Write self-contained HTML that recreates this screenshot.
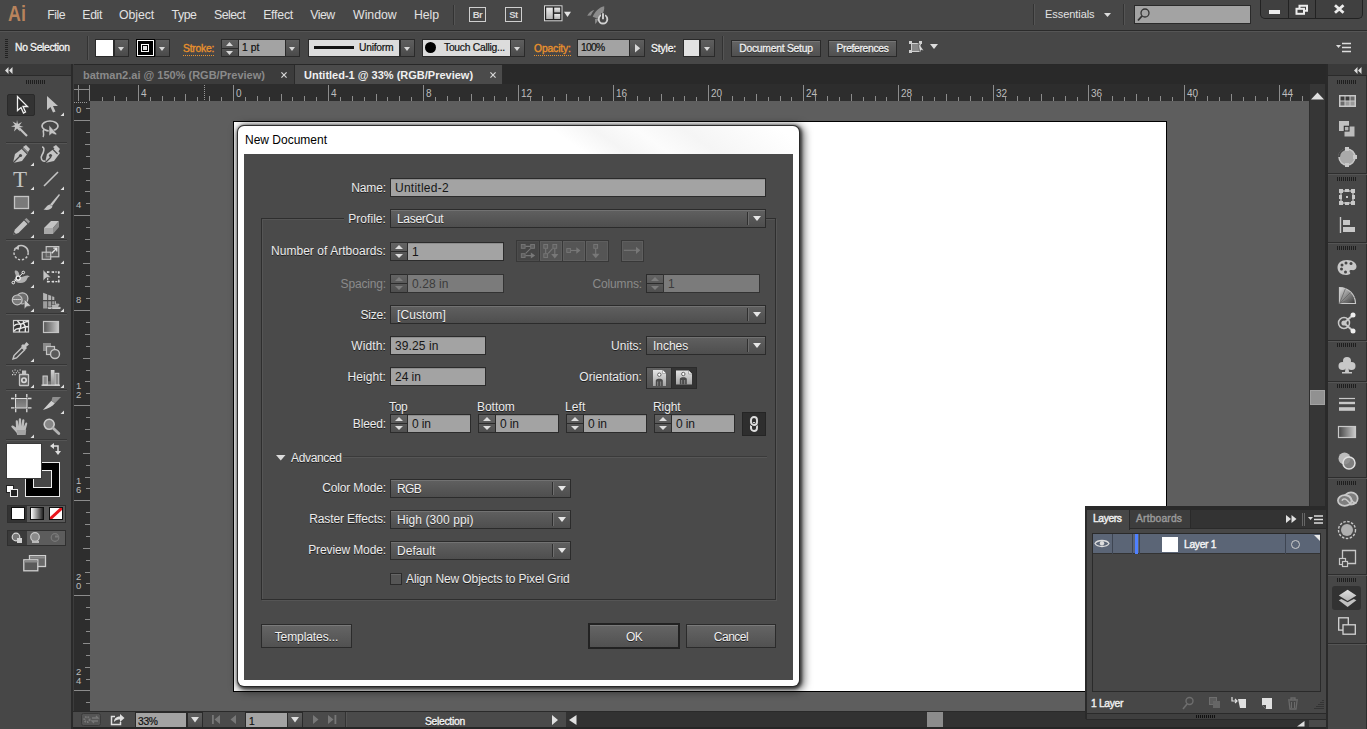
<!DOCTYPE html>
<html><head><meta charset="utf-8"><title>Adobe Illustrator - New Document</title>
<style>
*{box-sizing:border-box;margin:0;padding:0}
html,body{width:1367px;height:729px;overflow:hidden;background:#474747;font-family:"Liberation Sans",sans-serif;font-size:12px;color:#e6e6e6}
div,span,svg,i{position:absolute}
div:before,div:after{position:absolute}
#menubar{left:0;top:0;width:1367px;height:30px;background:#474747}
#menubar .mi{top:8px;font-size:12.3px;color:#e2e2e2;white-space:nowrap;width:80px;text-align:center}
#ctrl{left:0;top:30px;width:1367px;height:34px;background:#474747;border-top:1px solid #2b2b2b;box-shadow:inset 0 1px 0 #555}
#tabs{left:0;top:64px;width:1367px;height:20px;background:#292929}
.sq{width:17px;height:15px;border:1px solid #cfcfcf;font-size:9.5px;font-weight:bold;color:#d8d8d8;text-align:center;line-height:13px;letter-spacing:-.5px}
.vs{width:1px;background:#333;box-shadow:1px 0 0 #555}
.cb{top:8px;height:18px;border:1px solid #2a2a2a}
.ddb{top:8px;height:18px;width:15px;border:1px solid #2a2a2a;background:linear-gradient(#5f5f5f,#4a4a4a)}
.ddb:after{content:"";left:3px;top:7px;border:3.5px solid transparent;border-top:4px solid #d8d8d8;border-bottom:0}
.ol{top:12px;font-size:10.3px;color:#e8912d;border-bottom:1px dotted #e8912d;line-height:12px;-webkit-text-stroke:.35px #e8912d;white-space:nowrap}
.wt{font-size:10.3px;color:#f2f2f2;-webkit-text-stroke:.35px #f2f2f2;text-shadow:0 1px 0 #222;white-space:nowrap}
.dt{font-size:10.3px;color:#111;white-space:nowrap;-webkit-text-stroke:.2px #111}
.btn{border:1px solid #2a2a2a;background:linear-gradient(#646464,#505050);box-shadow:inset 0 1px 0 #757575;text-align:center;color:#f0f0f0;text-shadow:0 1px 0 #222;white-space:nowrap}
#tools{left:0;top:64px;width:74px;height:665px;background:#474747}
.sep{left:6px;width:61px;height:1px;background:#363636;box-shadow:0 1px 0 #555}
.dgrip{left:11px;width:20px;height:4px;background:repeating-linear-gradient(90deg,#1e1e1e 0 1px,transparent 1px 2px)}
.dsep{left:2px;width:39px;height:1px;background:#2d2d2d;box-shadow:0 1px 0 #555}
#canvas{left:74px;top:84px;width:1252px;height:627px;background:#5e5e5e}
#artboard{left:233px;top:121px;width:934px;height:571px;background:#fff;border:1px solid #000}
#dock{left:1326px;top:64px;width:41px;height:665px;background:#474747}
#status{left:73px;top:711px;width:1253px;height:18px;background:#4a4a4a}
#layers{left:1086px;top:507px;width:241px;height:213px;background:#474747;box-shadow:-1px -1px 0 #2a2a2a}
#layers .bt{font-size:10.3px;white-space:nowrap}
#dialog{left:238px;top:126px;width:561px;height:560px;border-radius:6px;background:linear-gradient(35deg,#fff 0 58%,#f5f5f5 65%,#fcfcfc 72%,#f5f5f5 80%,#fafafa 88%,#fff 96%) 0 0/561px 28px no-repeat #fff;box-shadow:0 0 0 1px rgba(40,40,40,.9),1px 1px 3px 2px rgba(0,0,0,.55),2px 2px 9px 3px rgba(0,0,0,.6)}
#dlgc{left:244px;top:154px;width:549px;height:526px;background:#4a4a4a;border:1px solid #4a4a4a;font-size:12px}
#dlgc .l{color:#ececec;text-shadow:0 1px 0 #1e1e1e;white-space:nowrap;text-align:right;width:200px;line-height:14px}
#dlgc .l.dis{color:#8b8b8b;text-shadow:none}
#dlgc .tl{color:#ececec;text-shadow:0 1px 0 #1e1e1e;white-space:nowrap;line-height:14px}
.f{height:19px;background:#a3a3a3;border:1px solid #2b2b2b;color:#161616;line-height:19px;padding-left:4px;white-space:nowrap;box-shadow:inset 0 1px 0 #8d8d8d}
.f.dis{background:#7b7b7b;color:#3c3c3c;box-shadow:none;border-color:#333}
.dd{height:19px;background:linear-gradient(#606060,#4e4e4e);border:1px solid #2b2b2b;color:#f0f0f0;line-height:19px;padding-left:6px;white-space:nowrap;box-shadow:inset 0 1px 0 #727272;text-shadow:0 1px 0 #2a2a2a}
.dd:before{content:"";right:17px;top:2px;width:1px;height:13px;background:#2f2f2f;box-shadow:1px 0 0 #6e6e6e}
.dd:after{content:"";right:4px;top:6px;border:4.2px solid transparent;border-top:5.6px solid #e6e6e6;border-bottom:0}
.sp{width:18px;height:19px;background:linear-gradient(#636363,#4f4f4f);border:1px solid #2b2b2b}
.sp:before{content:"";left:0;top:8px;width:16px;height:1px;background:#2b2b2b}
.sp:after{content:"";left:4px;top:2px;width:0;height:0;border:4px solid transparent;border-bottom:4px solid #dcdcdc;border-top:0}
.sp i{left:4px;top:11px;width:0;height:0;border:4px solid transparent;border-top:4px solid #dcdcdc;border-bottom:0}
.sp.dis:after{border-bottom-color:#7c7c7c}.sp.dis i{border-top-color:#7c7c7c}
.b{border:1px solid #2b2b2b;background:linear-gradient(#656565,#515151);box-shadow:inset 0 1px 0 #7a7a7a;text-align:center;color:#f0f0f0;text-shadow:0 1px 0 #222;white-space:nowrap;font-size:12px}
.ib{width:24px;height:22px;background:#535353;border:1px solid #383838}
</style></head>
<body>
<div id="canvas"></div>
<div id="hruler" style="left:74px;top:84px;width:1235px;height:17px;background:#2d2d2d"></div>
<div id="vruler" style="left:74px;top:84px;width:16px;height:627px;background:#2d2d2d"></div>
<svg style="left:74px;top:84px" width="1235" height="17" viewBox="74 84 1235 17"><path d="M102.5 97v4M114.5 96v5M126.5 97v4M138.5 85v16M150.5 97v4M162.5 96v5M174.5 97v4M185.5 94v7M197.5 97v4M209.5 96v5M221.5 97v4M233.5 85v16M245.5 97v4M257.5 96v5M269.5 97v4M281.5 94v7M292.5 97v4M304.5 96v5M316.5 97v4M328.5 85v16M340.5 97v4M352.5 96v5M364.5 97v4M376.5 94v7M387.5 97v4M399.5 96v5M411.5 97v4M423.5 85v16M435.5 97v4M447.5 96v5M459.5 97v4M471.5 94v7M483.5 97v4M494.5 96v5M506.5 97v4M518.5 85v16M530.5 97v4M542.5 96v5M554.5 97v4M566.5 94v7M578.5 97v4M589.5 96v5M601.5 97v4M613.5 85v16M625.5 97v4M637.5 96v5M649.5 97v4M661.5 94v7M673.5 97v4M684.5 96v5M696.5 97v4M708.5 85v16M720.5 97v4M732.5 96v5M744.5 97v4M756.5 94v7M768.5 97v4M780.5 96v5M791.5 97v4M803.5 85v16M815.5 97v4M827.5 96v5M839.5 97v4M851.5 94v7M863.5 97v4M875.5 96v5M886.5 97v4M898.5 85v16M910.5 97v4M922.5 96v5M934.5 97v4M946.5 94v7M958.5 97v4M970.5 96v5M982.5 97v4M993.5 85v16M1005.5 97v4M1017.5 96v5M1029.5 97v4M1041.5 94v7M1053.5 97v4M1065.5 96v5M1077.5 97v4M1088.5 85v16M1100.5 97v4M1112.5 96v5M1124.5 97v4M1136.5 94v7M1148.5 97v4M1160.5 96v5M1172.5 97v4M1184.5 85v16M1195.5 97v4M1207.5 96v5M1219.5 97v4M1231.5 94v7M1243.5 97v4M1255.5 96v5M1267.5 97v4M1279.5 85v16M1290.5 97v4M1302.5 96v5" stroke="#8c8c8c" stroke-width="1" fill="none"/><text x="141" y="97" font-size="10" fill="#bdbdbd" font-family="Liberation Sans,sans-serif">4</text><text x="236" y="97" font-size="10" fill="#bdbdbd" font-family="Liberation Sans,sans-serif">0</text><text x="331" y="97" font-size="10" fill="#bdbdbd" font-family="Liberation Sans,sans-serif">4</text><text x="426" y="97" font-size="10" fill="#bdbdbd" font-family="Liberation Sans,sans-serif">8</text><text x="521" y="97" font-size="10" fill="#bdbdbd" font-family="Liberation Sans,sans-serif">12</text><text x="616" y="97" font-size="10" fill="#bdbdbd" font-family="Liberation Sans,sans-serif">16</text><text x="711" y="97" font-size="10" fill="#bdbdbd" font-family="Liberation Sans,sans-serif">20</text><text x="806" y="97" font-size="10" fill="#bdbdbd" font-family="Liberation Sans,sans-serif">24</text><text x="901" y="97" font-size="10" fill="#bdbdbd" font-family="Liberation Sans,sans-serif">28</text><text x="996" y="97" font-size="10" fill="#bdbdbd" font-family="Liberation Sans,sans-serif">32</text><text x="1091" y="97" font-size="10" fill="#bdbdbd" font-family="Liberation Sans,sans-serif">36</text><text x="1187" y="97" font-size="10" fill="#bdbdbd" font-family="Liberation Sans,sans-serif">40</text><text x="1282" y="97" font-size="10" fill="#bdbdbd" font-family="Liberation Sans,sans-serif">44</text><path d="M78.5 85v16M74 89.5h16M89.5 85v16" stroke="#8c8c8c" fill="none"/><path d="M204.5 85v16" stroke="#999" stroke-dasharray="1 1" fill="none"/></svg>
<svg style="left:74px;top:101px" width="16" height="610" viewBox="74 101 16 610"><path d="M86 108.5h4M74 120.5h16M86 132.5h4M85 144.5h5M86 156.5h4M83 168.5h7M86 180.5h4M85 191.5h5M86 203.5h4M74 215.5h16M86 227.5h4M85 239.5h5M86 251.5h4M83 263.5h7M86 275.5h4M85 286.5h5M86 298.5h4M74 310.5h16M86 322.5h4M85 334.5h5M86 346.5h4M83 358.5h7M86 370.5h4M85 381.5h5M86 393.5h4M74 405.5h16M86 417.5h4M85 429.5h5M86 441.5h4M83 453.5h7M86 465.5h4M85 477.5h5M86 488.5h4M74 500.5h16M86 512.5h4M85 524.5h5M86 536.5h4M83 548.5h7M86 560.5h4M85 572.5h5M86 583.5h4M74 595.5h16M86 607.5h4M85 619.5h5M86 631.5h4M83 643.5h7M86 655.5h4M85 667.5h5M86 679.5h4M74 690.5h16M86 702.5h4" stroke="#8c8c8c" stroke-width="1" fill="none"/><path d="M74 102.5h13" stroke="#999" stroke-dasharray="1 1"/><text x="76" y="113.2" font-size="9.5" fill="#bdbdbd" font-family="Liberation Sans,sans-serif">0</text><text x="76" y="208.2" font-size="9.5" fill="#bdbdbd" font-family="Liberation Sans,sans-serif">4</text><text x="76" y="303.3" font-size="9.5" fill="#bdbdbd" font-family="Liberation Sans,sans-serif">8</text><text x="76" y="389.4" font-size="9.5" fill="#bdbdbd" font-family="Liberation Sans,sans-serif">1</text><text x="76" y="398.4" font-size="9.5" fill="#bdbdbd" font-family="Liberation Sans,sans-serif">2</text><text x="76" y="484.4" font-size="9.5" fill="#bdbdbd" font-family="Liberation Sans,sans-serif">1</text><text x="76" y="493.4" font-size="9.5" fill="#bdbdbd" font-family="Liberation Sans,sans-serif">6</text><text x="76" y="579.5" font-size="9.5" fill="#bdbdbd" font-family="Liberation Sans,sans-serif">2</text><text x="76" y="588.5" font-size="9.5" fill="#bdbdbd" font-family="Liberation Sans,sans-serif">0</text><text x="76" y="674.5" font-size="9.5" fill="#bdbdbd" font-family="Liberation Sans,sans-serif">2</text><text x="76" y="683.5" font-size="9.5" fill="#bdbdbd" font-family="Liberation Sans,sans-serif">4</text></svg>
<div style="left:1309px;top:84px;width:17px;height:627px;background:#363636;border-left:1px solid #2d2d2d;border-right:1px solid #2a2a2a"></div>
<svg style="left:1311px;top:92px" width="14" height="8"><path d="M0 7.5h13l-6.5-7z" fill="#e0e0e0"/></svg>
<div style="left:1310px;top:390px;width:15px;height:15px;background:#919191;border:1px solid #a2a2a2"></div>
<div id="artboard"></div>
<div id="menubar">
<span style="left:8px;top:2px;font-size:21.5px;font-weight:bold;color:#b9835c;transform:scaleX(.83);transform-origin:0 0;white-space:nowrap">Ai</span>
<span class="mi" style="left:16.2px;letter-spacing:-0.48px">File</span>
<span class="mi" style="left:52.2px;letter-spacing:-0.38px">Edit</span>
<span class="mi" style="left:96.6px;letter-spacing:-0.04px">Object</span>
<span class="mi" style="left:144px;letter-spacing:-0.44px">Type</span>
<span class="mi" style="left:189.5px;letter-spacing:-0.51px">Select</span>
<span class="mi" style="left:238.1px;letter-spacing:-0.22px">Effect</span>
<span class="mi" style="left:282.4px;letter-spacing:-0.51px">View</span>
<span class="mi" style="left:334.9px;letter-spacing:-0.01px">Window</span>
<span class="mi" style="left:386.5px;letter-spacing:-0.07px">Help</span>
<div class="vs" style="left:453px;top:5px;height:20px"></div>
<div class="sq" style="left:469px;top:7px">Br</div>
<div class="sq" style="left:505px;top:7px">St</div>
<svg style="left:544px;top:5px" width="28" height="17" viewBox="0 0 28 17"><defs><linearGradient id="lg" x1="0" y1="0" x2="0" y2="1"><stop offset="0" stop-color="#ececec"/><stop offset="1" stop-color="#b4b4b4"/></linearGradient></defs><rect x=".5" y=".8" width="17.5" height="15" fill="#222" stroke="#d8d8d8"/><rect x="2.2" y="2.6" width="6.6" height="11.4" fill="url(#lg)"/><rect x="10.2" y="2.6" width="6" height="4.8" fill="url(#lg)"/><rect x="10.2" y="8.9" width="6" height="5.1" fill="url(#lg)"/><path d="M20 6.8h7l-3.5 5.2z" fill="#e4e4e4"/></svg>
<svg style="left:586px;top:5px" width="26" height="21" viewBox="0 0 26 21"><path d="M18.2 1.2c.6 3.5-1 8-4.5 11l-3 1-4-1.5c2-5 6.5-9.5 11.5-10.5z" fill="#8c8c8c"/><path d="M1.2 10.8c1.5-3 4-5 7-5.8-1.5 1.8-2.6 3.6-3.4 5.6z" fill="#8c8c8c"/><path d="M9 14l3.5-.8c-.5 2-1.5 4-3.3 5.8z" fill="#8c8c8c"/><circle cx="17" cy="14.2" r="4.3" fill="#474747" stroke="#d2d2d2" stroke-width="1.9"/><path d="M17 8v6.2" stroke="#474747" stroke-width="4"/><path d="M17 8.2v6" stroke="#d2d2d2" stroke-width="1.9"/></svg>
<div class="vs" style="left:1033px;top:4px;height:21px"></div>
<span class="mi" style="left:1045px;top:8px;width:auto;text-align:left;font-size:11px;letter-spacing:-0.06px">Essentials</span>
<svg style="left:1104px;top:13px" width="8" height="5"><path d="M0 0h7l-3.5 4z" fill="#ddd"/></svg>
<div class="vs" style="left:1123px;top:4px;height:21px"></div>
<div style="left:1134px;top:5px;width:117px;height:19px;background:#a3a3a3;border:1px solid #2a2a2a"></div>
<svg style="left:1136px;top:7px" width="16" height="15" viewBox="0 0 16 15"><circle cx="9" cy="6" r="4" fill="none" stroke="#333" stroke-width="1.3"/><path d="M6 9l-4 4.5" stroke="#333" stroke-width="1.8"/></svg>
<div style="left:1260px;top:0;width:103px;height:19px;background:#404040;border:1px solid #222;border-top:0;border-radius:0 0 5px 5px"></div>
<div style="left:1288px;top:0;width:1px;height:18px;background:#222"></div>
<div style="left:1315px;top:0;width:1px;height:18px;background:#222"></div>
<div style="left:1269px;top:10px;width:11px;height:4px;background:#ececec"></div>
<svg style="left:1295px;top:4px" width="14" height="12" viewBox="0 0 14 12"><path d="M4.5 4V1.8h7.5v5h-2.5" fill="none" stroke="#ececec" stroke-width="2"/><rect x="1.5" y="4.8" width="7.5" height="5" fill="none" stroke="#ececec" stroke-width="2"/></svg>
<svg style="left:1333px;top:4px" width="13" height="10" viewBox="0 0 13 10"><path d="M2 1.2l8.5 7.6M10.5 1.2L2 8.8" stroke="#ececec" stroke-width="2.8"/></svg>
</div>
<div id="ctrl">
<div style="left:5px;top:8px;width:3px;height:20px;background:repeating-linear-gradient(#222 0 1px,transparent 1px 2px)"></div>
<span class="wt" style="left:15px;top:11px;font-size:10.3px;letter-spacing:-0.31px">No Selection</span>
<div class="vs" style="left:87px;top:5px;height:24px"></div>
<div class="cb" style="left:95px;width:19px;background:#fff"></div>
<div class="ddb" style="left:114px"></div>
<div class="cb" style="left:136px;width:19px;background:#000;border-color:#000;box-shadow:inset 0 0 0 1px #fff"></div>
<div style="left:141px;top:13px;width:8px;height:8px;border:1px solid #fff"></div>
<div style="left:143px;top:15px;width:4px;height:4px;background:#e0e0e0"></div>
<div class="ddb" style="left:155px"></div>
<span class="ol" style="left:183px;font-size:10.3px;letter-spacing:-0.22px">Stroke:</span>
<div class="cb" style="left:221px;width:18px;background:linear-gradient(#5f5f5f,#4a4a4a)"></div>
<div style="left:222px;top:17px;width:16px;height:1px;background:#2a2a2a"></div>
<svg style="left:225px;top:11px" width="10" height="14"><path d="M1 4h7l-3.5-4zM1 9h7l-3.5 4z" fill="#d8d8d8"/></svg>
<div class="cb" style="left:238px;width:48px;background:#a3a3a3"></div>
<span class="dt" style="left:242px;top:11px;font-size:10.3px;letter-spacing:0.05px">1 pt</span>
<div class="ddb" style="left:285px"></div>
<div class="cb" style="left:308px;width:92px;background:#dcdcdc"></div>
<div style="left:314px;top:15px;width:40px;height:3px;background:#111"></div>
<span class="dt" style="left:359px;top:11px;font-size:10.3px;letter-spacing:-0.25px">Uniform</span>
<div class="ddb" style="left:400px"></div>
<div class="cb" style="left:422px;width:89px;background:#dcdcdc"></div>
<div style="left:425px;top:11px;width:11px;height:11px;border-radius:6px;background:#000"></div>
<span class="dt" style="left:444px;top:11px;font-size:10.3px;letter-spacing:-0.25px">Touch Callig...</span>
<div class="ddb" style="left:510px"></div>
<span class="ol" style="left:534px;font-size:10.3px;letter-spacing:-0.12px">Opacity:</span>
<div class="cb" style="left:577px;width:53px;background:#a3a3a3"></div>
<span class="dt" style="left:581px;top:11px;font-size:10.3px;letter-spacing:-0.69px">100%</span>
<div class="cb" style="left:629px;width:16px;background:linear-gradient(#5f5f5f,#4a4a4a)"></div>
<svg style="left:635px;top:13px" width="6" height="9"><path d="M0 0v8.5l5.2-4.25z" fill="#d8d8d8"/></svg>
<span class="wt" style="left:651px;top:12px;font-size:10.3px;letter-spacing:-0.13px">Style:</span>
<div class="cb" style="left:683px;width:17px;background:#e2e2e2"></div>
<div class="ddb" style="left:700px"></div>
<div class="vs" style="left:722px;top:5px;height:24px"></div>
<div class="btn" style="left:731px;top:9px;width:90px;height:17px;line-height:15px;font-size:10.3px;letter-spacing:-0.23px;-webkit-text-stroke:.3px #eee">Document Setup</div>
<div class="btn" style="left:828px;top:9px;width:69px;height:17px;line-height:15px;font-size:10.3px;letter-spacing:-0.32px;-webkit-text-stroke:.3px #eee">Preferences</div>
<svg style="left:907px;top:8px" width="34" height="16" viewBox="0 0 34 16"><rect x="4.5" y="4.5" width="9" height="8" fill="#888" stroke="#cfcfcf"/><path d="M2 2h3v3h-3zM12 2h3v3h-3zM2 11h3v3h-3z" fill="#cfcfcf"/><path d="M11 3l6 9-3-1-1 3z" fill="#ddd" stroke="#333" stroke-width=".5"/><path d="M23 5h8l-4 5z" fill="#ddd"/></svg>
<svg style="left:1336px;top:11px" width="16" height="11" viewBox="0 0 16 11"><path d="M0 3h5l-2.5 3z" fill="#ddd"/><path d="M6 1.5h9M6 5.5h9M6 9.5h9" stroke="#ddd" stroke-width="1.4"/></svg>
</div>
<div id="tabs">
<div style="left:0;top:0;width:1367px;height:1px;background:#282828"></div>
<div style="left:73px;top:1px;width:222px;height:19px;background:#3c3c3c;border-right:1px solid #2a2a2a"></div>
<span style="left:83px;top:5px;font-size:11px;font-weight:bold;color:#8a8a8a;white-space:nowrap">batman2.ai @ 150% (RGB/Preview)</span>
<svg style="left:281px;top:8px" width="6" height="6"><path d="M.4.4l5.2 5.2M5.6.4l-5.2 5.2" stroke="#d8d8d8" stroke-width="1.2"/></svg>
<div style="left:295px;top:1px;width:208px;height:19px;background:#4b4b4b;border-right:1px solid #2a2a2a"></div>
<span style="left:304px;top:5px;font-size:11px;font-weight:bold;color:#f0f0f0;white-space:nowrap">Untitled-1 @ 33% (RGB/Preview)</span>
<svg style="left:490px;top:8px" width="6" height="6"><path d="M.4.4l5.2 5.2M5.6.4l-5.2 5.2" stroke="#d8d8d8" stroke-width="1.2"/></svg>
</div>
<div id="tools">
<div style="left:0;top:0;width:73px;height:12px;background:#3a3a3a;border-bottom:1px solid #2a2a2a"></div>
<svg style="left:5px;top:3px" width="9" height="7"><path d="M3.5 0v7l-3.5-3.5zM7.5 0v7l-3.5-3.5z" fill="#ddd"/></svg>
<div style="left:26px;top:16px;width:20px;height:4px;background:repeating-linear-gradient(90deg,#1e1e1e 0 1px,transparent 1px 2px)"></div>
<div class="sep" style="top:78px"></div><div class="sep" style="top:175px"></div><div class="sep" style="top:249px"></div><div class="sep" style="top:300px"></div><div class="sep" style="top:325px"></div><div class="sep" style="top:375px"></div>
<div style="left:71px;top:0;width:2px;height:665px;background:#2a2a2a"></div><div style="left:73px;top:0;width:1px;height:665px;background:#3c3c3c"></div>
</div>
<div id="toolicons">
<div style="left:7px;top:94px;width:28px;height:22px;background:#333;border:1px solid #2a2a2a;border-radius:2px"></div>
<svg style="left:8px;top:93px" width="26" height="24" viewBox="0 0 26 24"><path d="M9.5 3.5v14l3.5-3 2.5 5.5 2-1-2.5-5.5h4.5z" fill="#2a2a2a" stroke="#f2f2f2" stroke-width="1.3"/></svg>
<svg style="left:38px;top:93px" width="26" height="24" viewBox="0 0 26 24"><path d="M9 3v14l3.5-3 2.5 5.5 2.5-1-2.5-5.5h5z" fill="#c4c4c4"/><path d="M26 19.5v3.5h-3.5z" fill="#e0e0e0"/></svg>
<svg style="left:8px;top:117px" width="26" height="24" viewBox="0 0 26 24"><path d="M11 11l8 8" stroke="#c4c4c4" stroke-width="2.2"/><path d="M9 3l1 4 4-2-2.5 3.5 4 1.5-4.5.5 1 4-3-3-3 3 1-4.5-4-.5 4-1.5-2.5-3.5 4 2z" fill="#c4c4c4"/></svg>
<svg style="left:38px;top:117px" width="26" height="24" viewBox="0 0 26 24"><ellipse cx="12" cy="9" rx="8" ry="5" fill="none" stroke="#c4c4c4" stroke-width="1.7"/><path d="M6 12c-2 3 1 5-1 8" stroke="#c4c4c4" stroke-width="1.5" fill="none"/><path d="M11 8v11l3-2.5 4 1.5 1-1z" fill="#c4c4c4" stroke="#474747" stroke-width=".6"/></svg>
<svg style="left:8px;top:143px" width="26" height="24" viewBox="0 0 26 24"><path d="M5 20l2-9 8-6 5 5-6 8z" fill="#c4c4c4"/><path d="M15 4l3-2 4 4-2 3z" fill="#c4c4c4"/><path d="M5 20l7-7" stroke="#474747" stroke-width="1.2"/><circle cx="12.5" cy="12.5" r="1.6" fill="#474747"/><path d="M14 5.5l5.5 5.5" stroke="#474747" stroke-width="1.1"/><path d="M26 19.5v3.5h-3.5z" fill="#e0e0e0"/></svg>
<svg style="left:38px;top:143px" width="26" height="24" viewBox="0 0 26 24"><path d="M7 20l2-9 8-6 5 5-6 8z" fill="#c4c4c4"/><path d="M15 4l3-2 4 4-2 3z" fill="#c4c4c4"/><path d="M7 20l6-6" stroke="#474747" stroke-width="1.2"/><circle cx="12.5" cy="12.5" r="1.6" fill="#474747"/><path d="M14 5.5l5.5 5.5" stroke="#474747" stroke-width="1.1"/><path d="M4 4c3 0 2 5 0 8s0 7 3 6" stroke="#c4c4c4" stroke-width="1.6" fill="none"/></svg>
<svg style="left:8px;top:167px" width="26" height="24" viewBox="0 0 26 24"><text x="5" y="20" font-family="Liberation Serif,serif" font-size="23" fill="#c4c4c4">T</text><path d="M26 19.5v3.5h-3.5z" fill="#e0e0e0"/></svg>
<svg style="left:38px;top:167px" width="26" height="24" viewBox="0 0 26 24"><path d="M6 19L20 5" stroke="#c4c4c4" stroke-width="1.6"/><path d="M26 19.5v3.5h-3.5z" fill="#e0e0e0"/></svg>
<svg style="left:8px;top:191px" width="26" height="24" viewBox="0 0 26 24"><rect x="6.5" y="5.5" width="14" height="12" fill="#7a7a7a" stroke="#c4c4c4" stroke-width="1.3"/><path d="M26 19.5v3.5h-3.5z" fill="#e0e0e0"/></svg>
<svg style="left:38px;top:191px" width="26" height="24" viewBox="0 0 26 24"><path d="M21 3l1 1-8 11-2-1.5z" fill="#c4c4c4"/><path d="M11.5 13.5l3 2c-1 3-5 4-9 3 2-1 3-4 6-5z" fill="#c4c4c4"/><path d="M26 19.5v3.5h-3.5z" fill="#e0e0e0"/></svg>
<svg style="left:8px;top:215px" width="26" height="24" viewBox="0 0 26 24"><path d="M5 20l2-5.5 9-9 3.5 3.5-9 9z" fill="#c4c4c4"/><path d="M16.5 4.5l2-1.5 3.5 3.5-1.5 2z" fill="#9a9a9a"/><path d="M5 20l1-3 2 2z" fill="#474747"/><path d="M26 19.5v3.5h-3.5z" fill="#e0e0e0"/></svg>
<svg style="left:38px;top:215px" width="26" height="24" viewBox="0 0 26 24"><path d="M6 13l7-7h8l-6 7z" fill="#c4c4c4"/><path d="M6 13h9v6h-9z" fill="#a8a8a8"/><path d="M15 13l6-7v6l-6 7z" fill="#8c8c8c"/><path d="M26 19.5v3.5h-3.5z" fill="#e0e0e0"/></svg>
<svg style="left:8px;top:241px" width="26" height="24" viewBox="0 0 26 24"><path d="M20.2 11.7A7.1 7.1 0 1 1 8 6.8" fill="none" stroke="#c4c4c4" stroke-width="1.5" stroke-dasharray="2.3 1.7"/><path d="M9.5 5.6A7.1 7.1 0 0 1 20.2 11.7" fill="none" stroke="#c4c4c4" stroke-width="1.6"/><path d="M5.8 7.6l5.4-3.6-.4 4.8z" fill="#c4c4c4"/><path d="M26 19.5v3.5h-3.5z" fill="#e0e0e0"/></svg>
<svg style="left:38px;top:241px" width="26" height="24" viewBox="0 0 26 24"><rect x="8.2" y="5.6" width="12.6" height="10.2" fill="#5c5c5c" stroke="#c4c4c4" stroke-width="1.2"/><rect x="4.2" y="11.2" width="8.5" height="7.1" fill="#6a6a6a" fill-opacity=".6" stroke="#c4c4c4" stroke-width="1.2"/><path d="M13.7 12.2l5-5M15.3 7.2h3.5v3.4" stroke="#e4e4e4" stroke-width="1.3" fill="none"/><path d="M26 19.5v3.5h-3.5z" fill="#e0e0e0"/></svg>
<svg style="left:8px;top:265px" width="26" height="24" viewBox="0 0 26 24"><path d="M7 5.5c2.5-.5 4 1.5 4.3 4.2.3 2.5 2 3 4.7 1.6 2.5-1.3 5-1.2 5.8.8-1.3-.3-2.3.3-2.6 1.7-.8 3-4 4.4-7.4 4.2-2.6-.2-4.6-1.3-5.8-3.3 1.8-1 2.3-3.4 1.4-5.4-.6-1.3-1-2.6-.4-3.8z" fill="#b0b0b0"/><path d="M5.3 17.6l10-10.1" stroke="#f0f0f0" stroke-width="1"/><circle cx="5.3" cy="17.6" r="1.3" fill="#474747" stroke="#f0f0f0" stroke-width="1"/><circle cx="15.3" cy="7.5" r="1.3" fill="#474747" stroke="#f0f0f0" stroke-width="1"/><circle cx="10.2" cy="13.1" r="2" fill="#333" stroke="#f4f4f4" stroke-width="1.2"/><path d="M26 19.5v3.5h-3.5z" fill="#e0e0e0"/></svg>
<svg style="left:38px;top:265px" width="26" height="24" viewBox="0 0 26 24"><rect x="9.7" y="7" width="11.1" height="9.6" fill="none" stroke="#dedede" stroke-width="1.1" stroke-dasharray="2 1.7"/><path d="M8.9 6.2h1.7v1.7H8.9zM14.4 6.2h1.7v1.7h-1.7zM19.9 6.2h1.7v1.7h-1.7zM19.9 11h1.7v1.7h-1.7zM19.9 15.8h1.7v1.7h-1.7zM14.4 15.8h1.7v1.7h-1.7zM8.9 15.8h1.7v1.7H8.9z" fill="#dedede"/><path d="M5.1 4.8v10.9l3-2.9 4.7-.6z" fill="#c4c4c4" stroke="#474747" stroke-width=".5"/></svg>
<svg style="left:8px;top:289px" width="26" height="24" viewBox="0 0 26 24"><circle cx="14.3" cy="9.4" r="5.6" fill="#6e6e6e" stroke="#c4c4c4" stroke-width="1.2"/><circle cx="9.2" cy="10.9" r="4.9" fill="#7a7a7a" stroke="#c4c4c4" stroke-width="1.2"/><path d="M5.5 10.5h8" stroke="#fff" stroke-width="1.2" stroke-dasharray="1.1 .9"/><path d="M16.3 10.3v9.6l2.6-2.5 4.1-.4z" fill="#cacaca" stroke="#474747" stroke-width=".5"/><path d="M26 19.5v3.5h-3.5z" fill="#e0e0e0"/></svg>
<svg style="left:38px;top:289px" width="26" height="24" viewBox="0 0 26 24"><path d="M5.1 3.8l4.1 1.5v5.8H5.1zM10.2 5.7l3 1.1v4.3h-3zM14.2 7.2l2.1.8v3.1h-2.1z" fill="#b4b4b4"/><path d="M5.1 12.2h4.1v7.3H5.1zM10.2 12.2h3v5h-3zM14.2 12.2h2.1v3h-2.1z" fill="#9c9c9c"/><path d="M10.2 18.2h3v1.3h-3zM14.2 16.3h6v1h-6zM14.2 18.4h8v1.1h-8zM17.3 12.2v3h3.5v1" fill="none" stroke="#c8c8c8" stroke-width="1"/><path d="M26 19.5v3.5h-3.5z" fill="#e0e0e0"/></svg>
<svg style="left:8px;top:315px" width="26" height="24" viewBox="0 0 26 24"><rect x="5.5" y="5.5" width="15" height="11.5" fill="#343434" stroke="#d0d0d0" stroke-width="1.2"/><path d="M6 11c2.5-3.5 5-1 7.5-2s3.5-3 7-2.5M6 16c3-4 5.5-1.5 8-3s4-1 6.5-1.5M9.5 6c2 2.5 4.5 3 3 6.5s-1.5 3-1 4.5M15.5 6c-1.5 3 2.5 4 2 7s-.5 3 0 4" stroke="#e8e8e8" stroke-width="1.4" fill="none"/></svg>
<svg style="left:38px;top:315px" width="26" height="24" viewBox="0 0 26 24"><defs><linearGradient id="gg"><stop offset="0" stop-color="#555"/><stop offset="1" stop-color="#c8c8c8"/></linearGradient></defs><rect x="5.5" y="6.5" width="15" height="11" fill="url(#gg)" stroke="#c4c4c4" stroke-width="1.2"/></svg>
<svg style="left:8px;top:339px" width="26" height="24" viewBox="0 0 26 24"><path d="M5 20l1-3.5 8-8 2.5 2.5-8 8z" fill="none" stroke="#c4c4c4" stroke-width="1.4"/><path d="M13 7l2-2 1 1 2.5-3 2.5 2.5-3 2.5 1 1-2 2z" fill="#c4c4c4"/><path d="M26 19.5v3.5h-3.5z" fill="#e0e0e0"/></svg>
<svg style="left:38px;top:339px" width="26" height="24" viewBox="0 0 26 24"><rect x="5" y="4" width="8" height="8" fill="#8a8a8a"/><rect x="8.5" y="7.5" width="8" height="8" fill="#6a6a6a" stroke="#c4c4c4" stroke-width="1.2"/><circle cx="17" cy="15" r="4.5" fill="#5a5a5a" stroke="#c4c4c4" stroke-width="1.4"/></svg>
<svg style="left:8px;top:365px" width="26" height="24" viewBox="0 0 26 24"><rect x="11.5" y="9.5" width="9" height="11" rx=".6" fill="#5e5e5e" stroke="#c4c4c4" stroke-width="1.3"/><circle cx="16" cy="15.2" r="2.2" fill="none" stroke="#d8d8d8" stroke-width="1.7"/><rect x="14" y="5.5" width="4.2" height="3.5" fill="#c4c4c4"/><path d="M4 6h1.2M6.5 5h1.2M9 6h1.2M11.5 5h1.2M5.2 7.8h1.2M7.8 7.8h1.2M10.3 7.8h1.2M4 9.6h1.2M6.5 9.6h1.2" stroke="#d8d8d8" stroke-width="1.1"/><path d="M26 19.5v3.5h-3.5z" fill="#e0e0e0"/></svg>
<svg style="left:38px;top:365px" width="26" height="24" viewBox="0 0 26 24"><defs><linearGradient id="bg2" x1="0" y1="0" x2="0" y2="1"><stop offset="0" stop-color="#d4d4d4"/><stop offset="1" stop-color="#8e8e8e"/></linearGradient></defs><rect x="5" y="11" width="4.3" height="9" fill="#8a8a8a" stroke="#cfcfcf" stroke-width="1"/><rect x="10" y="16.3" width="2.6" height="3.7" fill="#6e6e6e"/><rect x="12.8" y="5" width="3.7" height="15" fill="url(#bg2)"/><rect x="17" y="8.3" width="3.8" height="11.7" fill="#8a8a8a" stroke="#cfcfcf" stroke-width="1"/><path d="M3.5 20.2h18.5" stroke="#d8d8d8" stroke-width="1.3"/><path d="M26 19.5v3.5h-3.5z" fill="#e0e0e0"/></svg>
<svg style="left:8px;top:391px" width="26" height="24" viewBox="0 0 26 24"><defs><linearGradient id="ag" x1="0" y1="0" x2="0" y2="1"><stop offset="0" stop-color="#6e6e6e"/><stop offset="1" stop-color="#8c8c8c"/></linearGradient></defs><rect x="7.5" y="7.5" width="11.5" height="9.5" fill="url(#ag)" stroke="#dcdcdc" stroke-width="1"/><path d="M3 7.5h3.5M20 7.5h3.5M3 16.8h3.5M20 16.8h3.5M7.7 3v3.5M18.8 3v3.5M7.7 17.8v3.5M18.8 17.8v3.5" stroke="#dcdcdc" stroke-width="1.3"/></svg>
<svg style="left:38px;top:391px" width="26" height="24" viewBox="0 0 26 24"><path d="M14.5 6h8.5l-6 6.2-3.5-2.7z" fill="#8e8e8e"/><path d="M13.3 9.7l3.6 2.6c-2.5 3.2-6.5 5.4-12 6.7z" fill="#cfcfcf"/><path d="M26 19.5v3.5h-3.5z" fill="#e0e0e0"/></svg>
<svg style="left:8px;top:415px" width="26" height="24" viewBox="0 0 26 24"><path d="M8 12.5l-.3-6a1.1 1.1 0 0 1 2.2-.2l.6 5 .3-6.8a1.15 1.15 0 0 1 2.3 0l.2 6.8.9-6a1.1 1.1 0 0 1 2.2.3l-.6 6.2 1.5-3.6a1 1 0 0 1 1.9.7l-1.3 5-.7 6.1h-7.8l-1-2.5-5-5.5a1.1 1.1 0 0 1 1.6-1.4z" fill="#bcbcbc"/><path d="M8.5 15h9.7l-.7 5H9.7z" fill="#a4a4a4"/><path d="M26 19.5v3.5h-3.5z" fill="#e0e0e0"/></svg>
<svg style="left:38px;top:415px" width="26" height="24" viewBox="0 0 26 24"><circle cx="11.2" cy="9.3" r="5" fill="#868686" stroke="#cdcdcd" stroke-width="1.6"/><path d="M15 13l5.8 5.6" stroke="#b4b4b4" stroke-width="2.8" stroke-linecap="round"/></svg>

<div style="left:25px;top:462px;width:35px;height:35px;background:#000;border:1px solid #e8e8e8"></div>
<div style="left:33px;top:470px;width:19px;height:18px;background:#474747;border:1px solid #f0f0f0"></div>
<div style="left:6px;top:443px;width:36px;height:36px;background:#fff;border:1px solid #3a3a3a"></div>
<svg style="left:49px;top:443px" width="13" height="13" viewBox="0 0 13 13"><path d="M4 3h5v6" fill="none" stroke="#ddd" stroke-width="1.5"/><path d="M1 3l4-3v6zM9 12l-3-4h6z" fill="#ddd"/></svg>
<div style="left:6px;top:485px;width:8px;height:8px;background:#fff;border:1px solid #222"></div>
<div style="left:10px;top:489px;width:8px;height:8px;background:#222;border:1px solid #eee;box-shadow:inset 0 0 0 1px #222"></div>
<div style="left:7px;top:505px;width:59px;height:18px;background:#5a5a5a;border:1px solid #2f2f2f"></div>
<div style="left:8px;top:506px;width:19px;height:16px;background:#333"></div>
<div style="left:11px;top:507px;width:14px;height:13px;background:#fff;border:1px solid #111"></div>
<div style="left:30px;top:507px;width:14px;height:13px;background:linear-gradient(90deg,#fff,#222);border:1px solid #111"></div>
<div style="left:49px;top:507px;width:14px;height:13px;background:#fff;border:1px solid #111"></div>
<svg style="left:50px;top:508px" width="12" height="11"><path d="M0 11L12 0" stroke="#e8141c" stroke-width="3"/></svg>
<div style="left:7px;top:530px;width:59px;height:16px;background:#5c5c5c;border:1px solid #2f2f2f"></div>
<div style="left:8px;top:531px;width:19px;height:14px;background:#3a3a3a"></div>
<svg style="left:8px;top:531px" width="57" height="14" viewBox="0 0 57 14"><circle cx="8" cy="6" r="3.8" fill="#777" stroke="#d8d8d8" stroke-width="1.2"/><rect x="9" y="7" width="5" height="5" fill="#d0d0d0"/><circle cx="27" cy="6" r="4.3" fill="#8a8a8a" stroke="#c8c8c8" stroke-width="1.2"/><path d="M24 10h7v2h-7z" fill="#bbb"/><circle cx="47" cy="6.5" r="3.8" fill="none" stroke="#7a7a7a" stroke-width="1.2"/><path d="M47 6.5h3v-2h-3z" fill="#7a7a7a"/></svg>
<svg style="left:23px;top:555px" width="24" height="18" viewBox="0 0 24 18"><rect x="6.5" y=".5" width="16" height="11" fill="#6a6a6a" stroke="#cfcfcf" stroke-width="1.3"/><rect x=".8" y="4.8" width="14" height="11" fill="#5a5a5a" stroke="#cfcfcf" stroke-width="1.3"/><path d="M7 1.5h15v2h-15zM1.5 5.5h13v2h-13z" fill="#8a8a8a"/></svg>
</div>
<div id="dock">
<div style="left:0;top:0;width:2px;height:665px;background:#2a2a2a"></div><div style="left:40px;top:0;width:1px;height:665px;background:#2e2e2e"></div>
<div style="left:2px;top:0;width:39px;height:12px;background:#3a3a3a;border-bottom:1px solid #2a2a2a"></div>
<svg style="left:28px;top:3px" width="9" height="7"><path d="M3.5 0v7l-3.5-3.5zM7.5 0v7l-3.5-3.5z" fill="#ddd"/></svg>
<div class="dgrip" style="top:16px"></div>
<svg style="left:10px;top:26px" width="22" height="22" viewBox="0 0 22 22"><rect x="3" y="5" width="17" height="12" fill="#c8c8c8"/><path d="M4.5 6.5h4v4h-4zM9.5 6.5h4v4h-4z" fill="#3a3a3a"/><path d="M14.5 6.5h4v4h-4zM4.5 11.5h4v4h-4z" fill="#6a6a6a"/><path d="M9.5 11.5h4v4h-4zM14.5 11.5h4v4h-4z" fill="#9a9a9a"/></svg>
<svg style="left:10px;top:54px" width="22" height="22" viewBox="0 0 22 22"><rect x="3" y="3" width="10" height="10" fill="#c2c2c2"/><rect x="8.5" y="8.5" width="10" height="10" fill="#bcbcbc"/><rect x="8.3" y="8.3" width="4.7" height="4.7" fill="#b4b4b4" stroke="#2e2e2e" stroke-width="1.1"/></svg>
<svg style="left:10px;top:82px" width="22" height="22" viewBox="0 0 22 22"><circle cx="11" cy="11" r="8" fill="#aaa" stroke="#c8c8c8" stroke-width="1.5"/><path d="M3 11a8 8 0 0 1 8-8" stroke="#474747" stroke-width="2" fill="none"/><rect x="9" y="1" width="4" height="4" fill="#c8c8c8"/><rect x="17" y="9" width="4" height="4" fill="#c8c8c8"/><rect x="9" y="17" width="4" height="4" fill="#c8c8c8"/></svg>
<div class="dsep" style="top:109px"></div>
<div class="dgrip" style="top:113px"></div>
<svg style="left:10px;top:122px" width="22" height="22" viewBox="0 0 22 22"><rect x="5" y="5" width="12" height="12" fill="none" stroke="#c8c8c8" stroke-width="1.3"/><path d="M3 3h4v4h-4zM9 3h4v3h-4zM15 3h4v4h-4zM3 9h3v4h-3zM16 9h3v4h-3zM3 15h4v4h-4zM9 16h4v3h-4zM15 15h4v4h-4z" fill="#c8c8c8"/><rect x="10" y="10" width="2" height="2" fill="#c8c8c8"/></svg>
<svg style="left:10px;top:150px" width="22" height="22" viewBox="0 0 22 22"><path d="M4.5 3v16" stroke="#c8c8c8" stroke-width="1.4"/><rect x="7" y="6" width="7" height="5" fill="#c8c8c8"/><rect x="7" y="13" width="12" height="5" fill="#c8c8c8"/></svg>
<div class="dsep" style="top:178px"></div>
<div class="dgrip" style="top:182px"></div>
<svg style="left:10px;top:192px" width="22" height="22" viewBox="0 0 22 22"><path d="M11 4c6 0 9.5 3 9.5 6.5s-3 4-5 3.5-2.5 1-1.5 2.5-1 2.5-4 2.5c-5 0-8.5-3-8.5-7.5S5 4 11 4z" fill="#c8c8c8"/><circle cx="6" cy="9" r="1.5" fill="#474747"/><circle cx="10" cy="7" r="1.5" fill="#474747"/><circle cx="15" cy="7.5" r="1.5" fill="#474747"/><circle cx="5.5" cy="13" r="1.5" fill="#474747"/><circle cx="9.5" cy="16" r="1.5" fill="#474747"/></svg>
<svg style="left:10px;top:220px" width="22" height="22" viewBox="0 0 22 22"><defs><linearGradient id="cg" x1="0" y1="0" x2="1" y2="1"><stop offset="0" stop-color="#ddd"/><stop offset="1" stop-color="#333"/></linearGradient></defs><path d="M3.5 3.5v16h16a16 16 0 0 0-16-16z" fill="url(#cg)" stroke="#c8c8c8" stroke-width="1.2"/><path d="M3.5 19.5l6-15M3.5 19.5l11-11M3.5 19.5l15-6" stroke="#666" stroke-width=".8"/></svg>
<svg style="left:10px;top:247px" width="24" height="24" viewBox="0 0 24 24"><circle cx="8" cy="12" r="5.5" fill="none" stroke="#c8c8c8" stroke-width="1.5"/><circle cx="8" cy="12" r="2.6" fill="#c8c8c8"/><path d="M8 12l9-8M8 12l9 8" stroke="#c8c8c8" stroke-width="2"/><circle cx="17" cy="4" r="2.5" fill="#eee"/><circle cx="17" cy="20" r="2.5" fill="#eee"/></svg>
<div class="dsep" style="top:276px"></div>
<div class="dgrip" style="top:279px"></div>
<svg style="left:10px;top:290px" width="22" height="22" viewBox="0 0 22 22"><circle cx="11" cy="7" r="4" fill="#c8c8c8"/><circle cx="6.5" cy="12" r="4" fill="#c8c8c8"/><circle cx="15.5" cy="12" r="4" fill="#c8c8c8"/><path d="M10 10h2l1 8h3v1.5H6V18h3z" fill="#c8c8c8"/></svg>
<div class="dsep" style="top:317px"></div>
<div class="dgrip" style="top:320px"></div>
<svg style="left:10px;top:329px" width="22" height="22" viewBox="0 0 22 22"><path d="M3 5.5h16" stroke="#c8c8c8" stroke-width="1.2"/><path d="M3 10h16" stroke="#c8c8c8" stroke-width="2.4"/><path d="M3 16h16" stroke="#c8c8c8" stroke-width="3.6"/></svg>
<svg style="left:10px;top:357px" width="22" height="22" viewBox="0 0 22 22"><defs><linearGradient id="dg"><stop offset="0" stop-color="#444"/><stop offset="1" stop-color="#ccc"/></linearGradient></defs><rect x="2.5" y="5.5" width="17" height="11" fill="url(#dg)" stroke="#c8c8c8" stroke-width="1.2"/></svg>
<svg style="left:10px;top:386px" width="22" height="22" viewBox="0 0 22 22"><circle cx="8.5" cy="8.5" r="6" fill="#bdbdbd"/><circle cx="13" cy="13" r="6" fill="#8a8a8a" fill-opacity=".85" stroke="#e0e0e0" stroke-width="1.5"/></svg>
<div class="dsep" style="top:413px"></div>
<div class="dgrip" style="top:417px"></div>
<svg style="left:10px;top:426px" width="24" height="22" viewBox="0 0 24 22"><ellipse cx="15" cy="8.5" rx="6.7" ry="6.2" fill="#7e7e7e" stroke="#c8c8c8" stroke-width="1.7"/><ellipse cx="8.7" cy="10.5" rx="6.8" ry="5.3" fill="#7e7e7e" stroke="#c8c8c8" stroke-width="1.7"/><path d="M8.6 5.2a6.8 5.3 0 0 1 6.4 3.5c1 2.5 3 4.5 5.5 4" fill="none" stroke="#c8c8c8" stroke-width="1.7"/><path d="M6 10.8c.5-2 3-2.5 4.5-1l3.5 3.5c1.5 1.5 4 1 4.5-1" fill="none" stroke="#c8c8c8" stroke-width="1.5"/></svg>
<svg style="left:10px;top:455px" width="22" height="22" viewBox="0 0 22 22"><circle cx="11" cy="11" r="8.5" fill="none" stroke="#c8c8c8" stroke-width="1.4" stroke-dasharray="2.5 1.5"/><circle cx="11" cy="11" r="6" fill="#b0b0b0"/></svg>
<svg style="left:10px;top:483px" width="22" height="22" viewBox="0 0 22 22"><path d="M6.5 12V3.5h13v13H12" fill="none" stroke="#c8c8c8" stroke-width="1.3"/><rect x="3.5" y="11.5" width="6" height="6" fill="#474747" stroke="#c8c8c8" stroke-width="1.2"/><rect x="6.5" y="14.5" width="5" height="5" fill="#474747" stroke="#c8c8c8" stroke-width="1.2"/></svg>
<div class="dsep" style="top:510px"></div>
<div class="dgrip" style="top:514px"></div>
<div style="left:6px;top:522px;width:29px;height:24px;background:#323232;border-radius:3px"></div>
<svg style="left:10px;top:523px" width="22" height="22" viewBox="0 0 22 22"><defs><linearGradient id="yg" x1="0" y1="0" x2="0" y2="1"><stop offset="0" stop-color="#e2e2e2"/><stop offset="1" stop-color="#b2b2b2"/></linearGradient></defs><path d="M2.8 13.2l2.6-1.3 6.2 3.3 6.2-3.3 2.6 1.3-8.8 6.7z" fill="#c2c2c2"/><path d="M11.6 2.7l8.8 5.7-8.8 5.7-8.8-5.7z" fill="url(#yg)"/></svg>
<svg style="left:10px;top:551px" width="22" height="22" viewBox="0 0 22 22"><rect x="2.7" y="2.8" width="9.6" height="12.3" fill="#474747" stroke="#d4d4d4" stroke-width="1.3"/><rect x="7" y="9.8" width="12.3" height="9.4" fill="#474747" stroke="#d4d4d4" stroke-width="1.3"/></svg>
<div class="dsep" style="top:579px"></div>
</div>
<div id="status">
<div style="left:0;top:0;width:1253px;height:1px;background:#2a2a2a"></div>
<div style="left:493px;top:1px;width:743px;height:16px;background:#323232"></div>
<div style="left:0;top:16px;width:1253px;height:2px;background:#262626"></div>
<svg style="left:8px;top:2px" width="20" height="13" viewBox="0 0 20 13"><rect x=".5" y=".5" width="19" height="12" rx="2" fill="#555" stroke="#3a3a3a"/><circle cx="6" cy="6.5" r="2.6" fill="none" stroke="#777" stroke-width="2" stroke-dasharray="1.5 1"/><path d="M11 5h6l-2-2M17 8h-6l2 2" stroke="#777" stroke-width="1.3" fill="none"/></svg>
<svg style="left:37px;top:2px" width="15" height="13" viewBox="0 0 15 13"><path d="M5 3.5H1.5v8h9V9" fill="none" stroke="#e0e0e0" stroke-width="1.5"/><path d="M4 9c0-4 3-5.5 6-5.5V1l4.5 4L10 9V6.5C8 6.5 5.5 7 4 9z" fill="#e0e0e0"/></svg>
<div style="left:62px;top:1px;width:52px;height:15px;background:#a3a3a3;border:1px solid #2a2a2a;border-bottom:0"></div>
<span class="dt" style="left:65px;top:5px;font-size:10.3px;letter-spacing:-0.3px">33%</span>
<div style="left:114px;top:1px;width:16px;height:15px;background:linear-gradient(#606060,#4c4c4c);border:1px solid #2a2a2a;border-bottom:0"></div>
<svg style="left:118px;top:6px" width="9" height="6"><path d="M0 0h8l-4 5.5z" fill="#e0e0e0"/></svg>
<svg style="left:139px;top:4px" width="30" height="9" viewBox="0 0 30 9"><path d="M0 0h1.8v9H0zM8 0v9L2.5 4.5zM24 0v9l-5.5-4.5z" fill="#777"/></svg>
<div style="left:172px;top:1px;width:43px;height:15px;background:#a3a3a3;border:1px solid #2a2a2a;border-bottom:0"></div>
<span class="dt" style="left:176px;top:5px;font-size:10.3px;letter-spacing:-0.23px">1</span>
<div style="left:214px;top:1px;width:16px;height:15px;background:linear-gradient(#606060,#4c4c4c);border:1px solid #2a2a2a;border-bottom:0"></div>
<svg style="left:218px;top:6px" width="9" height="6"><path d="M0 0h8l-4 5.5z" fill="#e0e0e0"/></svg>
<svg style="left:240px;top:4px" width="26" height="9" viewBox="0 0 26 9"><path d="M0 0v9l5.5-4.5zM15 0v9l5.5-4.5zM21.5 0h1.8v9h-1.8z" fill="#777"/></svg>
<div class="vs" style="left:272px;top:1px;height:15px"></div>
<span class="wt" style="left:352px;top:5px;font-size:10.3px;letter-spacing:-0.28px">Selection</span>
<svg style="left:479px;top:4px" width="7" height="10"><path d="M0 0v10l6-5z" fill="#e0e0e0"/></svg>
<svg style="left:496px;top:4px" width="8" height="10"><path d="M7.5 0v10L0 5z" fill="#e0e0e0"/></svg>
<div style="left:854px;top:1px;width:16px;height:15px;background:#8c8c8c"></div>
<svg style="left:1224px;top:10px" width="8" height="6"><path d="M7.5 0v5.5H0z" fill="#ddd"/></svg>
</div>
<div id="layers">
<div style="left:0;top:0;width:241px;height:3px;background:#2a2a2a"></div>
<div style="left:0;top:3px;width:241px;height:19px;background:#333;border-bottom:1px solid #2a2a2a"></div>
<div style="left:1px;top:3px;width:43px;height:20px;background:#474747;border-right:1px solid #2a2a2a"></div>
<span class="bt" style="left:7px;top:6px;color:#f0f0f0;-webkit-text-stroke:.4px #f0f0f0;font-size:10.3px;letter-spacing:-0.38px">Layers</span>
<div style="left:44px;top:3px;width:61px;height:19px;background:#3d3d3d;border-right:1px solid #2a2a2a;border-bottom:1px solid #2a2a2a"></div>
<span class="bt" style="left:50px;top:6px;color:#9a9a9a;-webkit-text-stroke:.4px #9a9a9a;font-size:10.3px;letter-spacing:0.17px">Artboards</span>
<svg style="left:200px;top:8px" width="12" height="8"><path d="M0 0v8l5-4zM5.5 0v8l5-4z" fill="#e0e0e0"/></svg>
<div style="left:216px;top:6px;width:3px;height:13px;border-left:1px solid #666;border-right:1px solid #666"></div>
<svg style="left:222px;top:8px" width="15" height="9" viewBox="0 0 15 9"><path d="M0 2h5l-2.5 3z" fill="#ddd"/><path d="M6 1h9M6 4.5h9M6 8h9" stroke="#ddd" stroke-width="1.3"/></svg>
<div style="left:0;top:3px;width:1px;height:210px;background:#2a2a2a"></div>
<div style="left:240px;top:3px;width:1px;height:210px;background:#2a2a2a"></div>
<div style="left:6px;top:26px;width:229px;height:159px;border:1px solid #2a2a2a;background:#474747"></div>
<div style="left:7px;top:27px;width:227px;height:20px;background:#5b6576;border-bottom:1px solid #333"></div>
<svg style="left:8px;top:31px" width="16" height="11" viewBox="0 0 16 11"><path d="M1 5.5C3.5 1.5 12.5 1.5 15 5.5 12.5 9.5 3.5 9.5 1 5.5z" fill="#5b6576" stroke="#ddd" stroke-width="1.3"/><circle cx="8" cy="5.3" r="2.2" fill="#ddd"/></svg>
<div style="left:26px;top:27px;width:1px;height:20px;background:#3e4552"></div>
<div style="left:46px;top:27px;width:1px;height:20px;background:#3e4552"></div>
<div style="left:49px;top:27px;width:3px;height:20px;background:#4f80ff"></div>
<div style="left:53px;top:27px;width:1px;height:20px;background:#3e4552"></div>
<div style="left:76px;top:30px;width:16px;height:15px;background:#fff"></div>
<span class="bt" style="left:98px;top:32px;color:#f4f4f4;-webkit-text-stroke:.4px #f4f4f4;font-size:10.3px;letter-spacing:-0.31px">Layer 1</span>
<div style="left:199px;top:27px;width:1px;height:20px;background:#3e4552"></div>
<div style="left:205px;top:33px;width:9px;height:9px;border:1px solid #ccc;border-radius:5px"></div>
<svg style="left:228px;top:28px" width="6" height="6"><path d="M0 0h6v6z" fill="#e8e8e8"/></svg>
<span class="bt" style="left:5px;top:191px;color:#f0f0f0;-webkit-text-stroke:.4px #f0f0f0;font-size:10.3px;letter-spacing:-0.32px">1 Layer</span>
<svg style="left:96px;top:189px" width="120" height="14" viewBox="0 0 120 14">
<circle cx="7.5" cy="5" r="3.5" fill="none" stroke="#6e6e6e" stroke-width="1.4"/><path d="M5 8l-4 5" stroke="#6e6e6e" stroke-width="1.6"/>
<rect x="27.5" y="1.5" width="7" height="7" fill="#5c5c5c" stroke="#6e6e6e"/><rect x="31" y="5" width="7" height="7" fill="#666"/>
<path d="M56 3h8v9h-6z" fill="#e0e0e0"/><path d="M50 1v4h5M53 3l2 2-2 2" stroke="#e0e0e0" stroke-width="1.2" fill="none"/>
<path d="M80 2h10v11h-6l-4-4z" fill="#e0e0e0"/><path d="M80 9h4v4z" fill="#474747"/>
<path d="M106 4h10M109 4V2h4v2M107 5l1 8h6l1-8" stroke="#6a6a6a" stroke-width="1.3" fill="none"/><path d="M109.5 6v6M112.5 6v6" stroke="#6a6a6a"/>
</svg>
<svg style="left:228px;top:192px" width="10" height="10"><path d="M9 1v1M9 3v1M7 3v1M9 5v1M7 5v1M5 5v1M9 7v1M7 7v1M5 7v1M3 7v1M9 9v1M7 9v1M5 9v1M3 9v1M1 9v1" stroke="#222" stroke-width="1"/></svg>
<div style="left:1px;top:206px;width:239px;height:6px;background:#3f3f3f;border-top:1px solid #2a2a2a"></div>
<div style="left:110px;top:208px;width:20px;height:3px;background:repeating-linear-gradient(90deg,#111 0 1px,transparent 1px 2px)"></div>
<div style="left:0;top:212px;width:241px;height:1px;background:#2a2a2a"></div>
</div>
<div id="dialog"></div>
<span style="left:245px;top:133px;font-size:12px;color:#000;white-space:nowrap">New Document</span>
<div id="dlgc">
<div style="left:16px;top:63px;width:515px;height:382px;border:1px solid #2e2e2e;box-shadow:inset 1px 1px 0 #555,1px 1px 0 #555"></div>
<div style="left:99px;top:61px;width:46px;height:5px;background:#4a4a4a"></div>
<span class="l" style="left:-59px;top:26px;letter-spacing:-0.11px">Name:</span>
<div class="f" style="left:145px;top:23px;width:376px;letter-spacing:0.25px">Untitled-2</div>
<span class="l" style="left:-59px;top:57px;letter-spacing:0.06px">Profile:</span>
<div class="dd" style="left:145px;top:54px;width:376px;letter-spacing:-0.3px">LaserCut</div>
<span class="l" style="left:-59px;top:89px;letter-spacing:0.05px">Number of Artboards:</span>
<div class="sp" style="left:145px;top:87px"><i></i></div>
<div class="f" style="left:162px;top:87px;width:97px">1</div>
<div style="left:271px;top:85px;width:24px;height:22px;background:#464646;border:1px solid #383838;box-shadow:inset 0 0 0 1px #4c4c4c"><svg style="left:-1px;top:-1px" width="24" height="22" viewBox="0 0 24 22"><rect x="5.300000000000001" y="4.5" width="3.8" height="3.8" fill="#5e5e5e" stroke="#787878" stroke-width=".9"/><rect x="14.700000000000001" y="4.5" width="3.8" height="3.8" fill="#5e5e5e" stroke="#787878" stroke-width=".9"/><rect x="5.300000000000001" y="13.700000000000001" width="3.8" height="3.8" fill="#5e5e5e" stroke="#787878" stroke-width=".9"/><path d="M9.5 6.4h5M14.5 8.7l-4.8 4.6M9.5 15.6h6" stroke="#787878" stroke-width="1.1" fill="none"/><path d="M14.8 12.6l4.4 3-4.4 3z" fill="#787878"/></svg></div>
<div style="left:294px;top:85px;width:24px;height:22px;background:#555;border:1px solid #383838;box-shadow:inset 0 0 0 1px #5e5e5e"><svg style="left:-1px;top:-1px" width="24" height="22" viewBox="0 0 24 22"><rect x="4.800000000000001" y="4.5" width="3.8" height="3.8" fill="#5e5e5e" stroke="#787878" stroke-width=".9"/><rect x="13.9" y="4.5" width="3.8" height="3.8" fill="#5e5e5e" stroke="#787878" stroke-width=".9"/><rect x="4.800000000000001" y="13.700000000000001" width="3.8" height="3.8" fill="#5e5e5e" stroke="#787878" stroke-width=".9"/><path d="M6.7 8.7v4.6M9.2 13.3l4.3-4.6M15.8 8.7v6" stroke="#787878" stroke-width="1.1" fill="none"/><path d="M12.2 14.1h7.2l-3.6 4.3z" fill="#787878"/></svg></div>
<div style="left:317px;top:85px;width:24px;height:22px;background:#555;border:1px solid #383838;box-shadow:inset 0 0 0 1px #5e5e5e"><svg style="left:-1px;top:-1px" width="24" height="22" viewBox="0 0 24 22"><rect x="4.800000000000001" y="8.6" width="3.8" height="3.8" fill="#5e5e5e" stroke="#787878" stroke-width=".9"/><path d="M9 10.5h6" stroke="#787878" stroke-width="1.1"/><path d="M14.3 7.2l4.2 3.3-4.2 3.3z" fill="#787878"/></svg></div>
<div style="left:340px;top:85px;width:24px;height:22px;background:#555;border:1px solid #383838;box-shadow:inset 0 0 0 1px #5e5e5e"><svg style="left:-1px;top:-1px" width="24" height="22" viewBox="0 0 24 22"><rect x="8.8" y="4.5" width="3.8" height="3.8" fill="#5e5e5e" stroke="#787878" stroke-width=".9"/><path d="M10.7 8.7v6" stroke="#787878" stroke-width="1.1"/><path d="M7 13.8h7.5l-3.75 4.4z" fill="#787878"/></svg></div>
<div style="left:376px;top:85px;width:23px;height:22px;background:#555;border:1px solid #383838;box-shadow:inset 0 0 0 1px #5e5e5e"><svg style="left:-1px;top:-1px" width="23" height="22" viewBox="0 0 23 22"><path d="M2.8 10.3h12.5" stroke="#787878" stroke-width="1.1"/><path d="M15 6.7l4.3 3.6-4.3 3.6z" fill="#787878"/></svg></div>
<span class="l dis" style="left:-59px;top:122px;letter-spacing:-0.16px">Spacing:</span>
<div class="sp dis" style="left:145px;top:119px"><i></i></div>
<div class="f dis" style="left:162px;top:119px;width:97px;letter-spacing:0.07px">0.28 in</div>
<span class="l dis" style="left:197px;top:122px;letter-spacing:-0.14px">Columns:</span>
<div class="sp dis" style="left:401px;top:119px"><i></i></div>
<div class="f dis" style="left:418px;top:119px;width:97px">1</div>
<span class="l" style="left:-59px;top:153px;letter-spacing:-0.26px">Size:</span>
<div class="dd" style="left:145px;top:150px;width:376px;letter-spacing:0.1px">[Custom]</div>
<span class="l" style="left:-59px;top:184px;letter-spacing:0.13px">Width:</span>
<div class="f" style="left:145px;top:181px;width:96px;letter-spacing:0.12px">39.25 in</div>
<span class="l" style="left:197px;top:184px;letter-spacing:0.04px">Units:</span>
<div class="dd" style="left:401px;top:181px;width:120px;letter-spacing:-0.03px">Inches</div>
<span class="l" style="left:-59px;top:215px;letter-spacing:0.08px">Height:</span>
<div class="f" style="left:145px;top:212px;width:96px;letter-spacing:-0.03px">24 in</div>
<span class="l" style="left:197px;top:215px;letter-spacing:0.05px">Orientation:</span>
<div style="left:401px;top:212px;width:26px;height:22px;background:linear-gradient(#626262,#525252);border:1px solid #2b2b2b"></div>
<div style="left:426px;top:212px;width:26px;height:22px;background:#333;border:1px solid #2b2b2b"></div>
<svg style="left:407px;top:214px" width="16" height="18" viewBox="0 0 16 18"><defs><linearGradient id="pg" x1="0" y1="0" x2="0" y2="1"><stop offset="0" stop-color="#e4e4e4"/><stop offset="1" stop-color="#a4a4a4"/></linearGradient></defs><path d="M1 1h9.5l3.5 3.5v12.5h-13z" fill="url(#pg)"/><path d="M10.5 1v3.5h3.5" fill="#f4f4f4" stroke="#888" stroke-width=".6"/><circle cx="7.3" cy="5.7" r="1.7" fill="#fff" stroke="#444" stroke-width=".8"/><path d="M3.8 17v-5.5c0-2.2 7-2.2 7 0v5.5h-1.7v-4.5h-.6v4.5h-2.4v-4.5h-.6v4.5z" fill="#4a4a4a"/></svg>
<svg style="left:430px;top:215px" width="18" height="15" viewBox="0 0 18 15"><path d="M1 .5h12.5l3.5 3.5v10.5h-16z" fill="url(#pg)"/><path d="M13.5 .5v3.5h3.5" fill="#f4f4f4" stroke="#888" stroke-width=".6"/><circle cx="8.3" cy="4" r="1.7" fill="#fff" stroke="#444" stroke-width=".8"/><path d="M4.8 14.5v-5.5c0-2.2 7-2.2 7 0v5.5h-1.7v-4.5h-.6v4.5h-2.4v-4.5h-.6v4.5z" fill="#4a4a4a"/></svg>
<span class="tl" style="left:144px;top:245px;letter-spacing:-0.35px">Top</span>
<div class="sp" style="left:145px;top:259px"><i></i></div>
<div class="f" style="left:162px;top:259px;width:64px;letter-spacing:-0.14px">0 in</div>
<span class="tl" style="left:232px;top:245px;letter-spacing:-0.04px">Bottom</span>
<div class="sp" style="left:233px;top:259px"><i></i></div>
<div class="f" style="left:250px;top:259px;width:64px;letter-spacing:-0.14px">0 in</div>
<span class="tl" style="left:320px;top:245px;letter-spacing:0.07px">Left</span>
<div class="sp" style="left:321px;top:259px"><i></i></div>
<div class="f" style="left:338px;top:259px;width:64px;letter-spacing:-0.14px">0 in</div>
<span class="tl" style="left:408px;top:245px;letter-spacing:-0.08px">Right</span>
<div class="sp" style="left:409px;top:259px"><i></i></div>
<div class="f" style="left:426px;top:259px;width:64px;letter-spacing:-0.14px">0 in</div>
<span class="l" style="left:-59px;top:262px;letter-spacing:-0.14px">Bleed:</span>
<div style="left:497px;top:257px;width:24px;height:24px;background:#2e2e2e;border:1px solid #252525"></div>
<svg style="left:503px;top:260px" width="12" height="18" viewBox="0 0 12 18"><rect x="3" y="8" width="6" height="8" rx="3" fill="none" stroke="#dedede" stroke-width="1.9"/><rect x="3" y="2" width="6" height="8" rx="3" fill="none" stroke="#333" stroke-width="3.6"/><rect x="3" y="2" width="6" height="8" rx="3" fill="none" stroke="#dedede" stroke-width="1.9"/><path d="M3 11v2.5" stroke="#dedede" stroke-width="1.9"/></svg>
<svg style="left:31px;top:300px" width="10" height="6"><path d="M0 0h9.5l-4.75 5.5z" fill="#dcdcdc"/></svg>
<span class="tl" style="left:46px;top:296px;letter-spacing:-0.35px">Advanced</span>
<div style="left:98px;top:301px;width:424px;height:1px;background:#3a3a3a;box-shadow:0 1px 0 #565656"></div>
<span class="l" style="left:-59px;top:326px;letter-spacing:-0.14px">Color Mode:</span>
<div class="dd" style="left:145px;top:324px;width:181px;letter-spacing:-0.6px">RGB</div>
<span class="l" style="left:-59px;top:357px;letter-spacing:-0.11px">Raster Effects:</span>
<div class="dd" style="left:145px;top:355px;width:181px;letter-spacing:0.09px">High (300 ppi)</div>
<span class="l" style="left:-59px;top:388px;letter-spacing:-0.12px">Preview Mode:</span>
<div class="dd" style="left:145px;top:386px;width:181px;letter-spacing:0.05px">Default</div>
<div style="left:145px;top:418px;width:12px;height:12px;background:#555;border:1px solid #2b2b2b;box-shadow:inset 0 1px 0 #666"></div>
<span class="tl" style="left:161px;top:417px;letter-spacing:-0.1px">Align New Objects to Pixel Grid</span>
<div class="b" style="left:16px;top:469px;width:91px;height:24px;line-height:24px;letter-spacing:-0.08px">Templates...</div>
<div class="b" style="left:343px;top:468px;width:92px;height:26px;line-height:24px;border:2px solid #222;letter-spacing:-0.6px">OK</div>
<div class="b" style="left:441px;top:469px;width:90px;height:24px;line-height:24px;letter-spacing:-0.48px">Cancel</div>
</div>
</body></html>
